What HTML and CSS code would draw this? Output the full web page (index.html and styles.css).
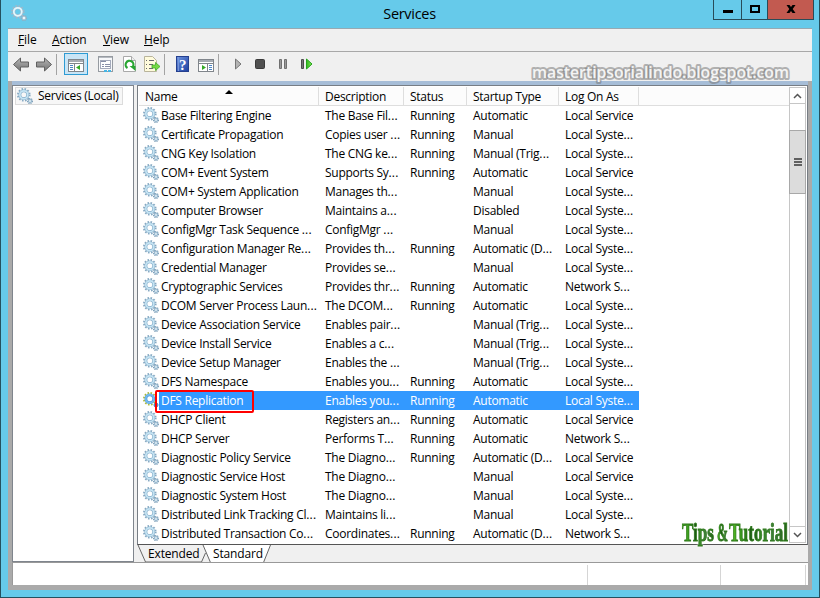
FILE: index.html
```html
<!DOCTYPE html>
<html lang="en">
<head>
    <meta charset="UTF-8">
    <meta name="viewport" content="width=device-width, initial-scale=1.0">
    <title>Services</title>
    <link rel="stylesheet" href="styles.css">
</head>
<body>
    <!-- Shared gear icons -->
    <svg class="defs" width="0" height="0">
        <symbol id="gear" viewBox="0 0 16 16">
            <circle cx="6.8" cy="6.8" r="5.9" fill="none" stroke="#86a9c2" stroke-width="1.8" stroke-dasharray="1.6 1.49"/>
            <circle cx="6.8" cy="6.8" r="3.9" fill="none" stroke="#85adca" stroke-width="2.8"/>
            <circle cx="6.8" cy="6.8" r="4" fill="none" stroke="#c5e4f3" stroke-width="1.7"/>
            <circle cx="13" cy="13" r="2.4" fill="none" stroke="#7d9eb8" stroke-width="1.3" stroke-dasharray="1.1 .78"/>
            <circle cx="13" cy="13" r="1.5" fill="#e8f3f8" stroke="#91b4cc" stroke-width="1.1"/>
        </symbol>
        <symbol id="gear-selected" viewBox="0 0 16 16">
            <circle cx="6.8" cy="6.8" r="5.9" fill="none" stroke="#a9b93c" stroke-width="1.8" stroke-dasharray="1.6 1.49"/>
            <circle cx="6.8" cy="6.8" r="3.9" fill="#fff" stroke="#4f9fe0" stroke-width="2.8"/>
            <circle cx="6.8" cy="6.8" r="4" fill="none" stroke="#78bdf0" stroke-width="1.5"/>
            <circle cx="13" cy="13" r="2" fill="#3f8fdd" stroke="#4a86bd"/>
        </symbol>
    </svg>

    <div class="window">
        <div class="titlebar">
            <svg class="gear title-gear"><use href="#gear"/></svg>
            <div class="title">Services</div>
            <div class="controls">
                <div class="control minimize"><span></span></div>
                <div class="control maximize"><span></span></div>
                <div class="control close"><svg width="10" height="8" viewBox="0 0 10 8"><path d="M.5 0h3L5 2 6.500 0h3L6.700 4l2.800 4h-3L5 6 3.500 8h-3l2.800-4z"/></svg></div>
            </div>
        </div>

        <div class="menubar">
            <span class="menu-file"><u>F</u>ile</span>
            <span class="menu-action"><u>A</u>ction</span>
            <span class="menu-view"><u>V</u>iew</span>
            <span class="menu-help"><u>H</u>elp</span>
        </div>

        <div class="toolbar">
            <svg width="804" height="29" viewBox="8 52 804 29">
                <defs>
                    <linearGradient id="arrow" x1="0" y1="0" x2="0" y2="1">
                        <stop offset="0" stop-color="#b5b5b5"/>
                        <stop offset="1" stop-color="#747474"/>
                    </linearGradient>
                    <linearGradient id="help" x1="0" y1="0" x2="1" y2="1">
                        <stop offset="0" stop-color="#6d93df"/>
                        <stop offset="1" stop-color="#1c3fa0"/>
                    </linearGradient>
                    <linearGradient id="go" x1="0" y1="0" x2="1" y2="0">
                        <stop offset="0" stop-color="#2fb81d"/>
                        <stop offset="1" stop-color="#86e75b"/>
                    </linearGradient>
                </defs>
                <!-- back / forward -->
                <path d="M13.500 64.500l7-6.500v4h8v5h-8v4z" fill="url(#arrow)" stroke="#606060"/>
                <path d="M51.500 64.500l-7-6.500v4h-8v5h8v4z" fill="url(#arrow)" stroke="#606060"/>
                <path d="M56.500 54v21M164.500 54v21M218.500 54v21" stroke="#a3a3a3"/>
                <!-- console tree toggle -->
                <rect x="64.500" y="53.500" width="23" height="21" fill="#c9e5f6" stroke="#2e9bd3"/>
                <rect x="68.500" y="59.500" width="15" height="12" fill="#fff" stroke="#80858b"/>
                <path d="M69 61h14" stroke="#a6abb2" stroke-width="2"/>
                <path d="M69 63.500h14M74.500 64v8" stroke="#80858b"/>
                <path d="M70 65.500h3M70 67.500h3M70 69.500h3" stroke="#4c86c6"/>
                <path d="M80 65v5l-4-2.500z" fill="#35a928"/>
                <!-- properties -->
                <rect x="98.500" y="56.500" width="14" height="15" fill="#f7f8fa" stroke="#969ba1"/>
                <path d="M99 57.500h13" stroke="#b6bac0"/>
                <rect x="100.500" y="60.500" width="10" height="8" fill="#fff" stroke="#a4aabb"/>
                <path d="M101 61.500h5M102 64.500h2M102 66.500h2M105 64.500h5M105 66.500h5" stroke="#8990a8"/>
                <path d="M104 71h3M108 71h3" stroke="#45b5e5" stroke-width="2"/>
                <!-- refresh -->
                <path d="M123.500 56.500h8l4 4v11h-12z" fill="#fff" stroke="#a9a9a9"/>
                <path d="M131.500 56.500v4h4" fill="#eee" stroke="#a9a9a9"/>
                <path d="M127.500 68A3.900 3.900 0 1 1 133 66.500" fill="none" stroke="#28a532" stroke-width="2.200"/>
                <path d="M129.500 66h6v5z" fill="#28a532"/>
                <!-- export list -->
                <path d="M144.500 56.500h8l4 4v11h-12z" fill="#fffbdc" stroke="#b9b49b"/>
                <path d="M146 60.500h1M146 64.500h1M146 68.500h1M149 60.500h5M149 64.500h4M149 68.500h4" stroke="#68686e"/>
                <path d="M152 65h3.500v-2.500l4.500 4-4.500 4V68H152z" fill="#76d943" stroke="#45ad28" stroke-width=".8"/>
                <!-- help -->
                <rect x="176.500" y="56.500" width="12" height="15" fill="url(#help)" stroke="#243f8e"/>
                <path d="M178.500 57v14" stroke="#7795d8"/>
                <text x="179" y="69.500" class="help-mark">?</text>
                <!-- action pane toggle -->
                <rect x="198.500" y="59.500" width="15" height="12" fill="#fff" stroke="#80858b"/>
                <path d="M199 61h14" stroke="#a6abb2" stroke-width="2"/>
                <path d="M199 63.500h14M207.500 64v8" stroke="#80858b"/>
                <path d="M209 65.500h3M209 67.500h3M209 69.500h3" stroke="#4c86c6"/>
                <path d="M202 65v5l4-2.500z" fill="#35a928"/>
                <!-- start, stop, pause, restart -->
                <path d="M235.500 59v10l5.500-5z" fill="#b3b3b3" stroke="#777"/>
                <rect x="255.500" y="59.500" width="9" height="9" rx="1" fill="#505050" stroke="#3a3a3a"/>
                <path d="M279.500 59.500h2v9h-2zM284.500 59.500h2v9h-2z" fill="#999" stroke="#707070"/>
                <path d="M301.500 59.500h2v9h-2z" fill="#777" stroke="#4d4d4d"/>
                <path d="M306.500 59v10l5.500-5z" fill="url(#go)" stroke="#25a51b"/>
            </svg>
            <svg class="watermark" width="264" height="34"><text x="2" y="26" textLength="257" lengthAdjust="spacingAndGlyphs">mastertipsorialindo.blogspot.com</text></svg>
        </div>

        <div class="workspace">
            <div class="panes">
                <div class="tree">
                    <div class="tree-item">
                        <svg class="gear"><use href="#gear"/></svg>
                        <span>Services (Local)</span>
                    </div>
                </div>

                <div class="right">
                    <div class="list">
                        <div class="table">
                            <div class="row head">
                                <div>Name<i class="sort"></i></div>
                                <div>Description</div>
                                <div>Status</div>
                                <div>Startup Type</div>
                                <div>Log On As</div>
                            </div>
                            <div id="services"></div>
                        </div>
                        <div class="scrollbar">
                            <div class="scroll-button"><svg width="9" height="6"><path d="M1 5l3.500-3.500L8 5"/></svg></div>
                            <div class="thumb"><span></span><span></span><span></span></div>
                            <div class="scroll-button down"><svg width="9" height="6"><path d="M1 1l3.500 3.500L8 1"/></svg></div>
                        </div>
                        <svg class="brand" width="112" height="32">
                            <defs>
                                <linearGradient id="brandFill" x1="0" y1="0" x2="1" y2="0">
                                    <stop offset="0" stop-color="#5cc422"/>
                                    <stop offset=".2" stop-color="#3b9a20"/>
                                    <stop offset=".4" stop-color="#17540f"/>
                                    <stop offset=".55" stop-color="#3a8a28"/>
                                    <stop offset=".75" stop-color="#3d7c3a"/>
                                    <stop offset="1" stop-color="#246317"/>
                                </linearGradient>
                            </defs>
                            <g class="brand-text">
                                <text x="2" y="22" textLength="32" lengthAdjust="spacingAndGlyphs">Tips</text>
                                <text x="37" y="22" textLength="11" lengthAdjust="spacingAndGlyphs">&amp;</text>
                                <text x="49" y="22" textLength="59" lengthAdjust="spacingAndGlyphs">Tutorial</text>
                            </g>
                        </svg>
                    </div>
                    <div class="tabs">
                        <svg width="135" height="18" viewBox="137 545 135 18">
                            <path d="M138 545l7.500 17h56l4-9" fill="none" stroke="#666"/>
                            <path d="M203 545l7.500 17.500h53l7-17.500" fill="#fff" stroke="#666"/>
                        </svg>
                        <span class="tab extended">Extended</span>
                        <span class="tab standard">Standard</span>
                    </div>
                </div>
            </div>
            <div class="statusbar"><div></div><div></div><div></div></div>
        </div>
    </div>

    <script>
        // name, description, status, startup type, log on as
        const services = [
            ['Base Filtering Engine', 'The Base Fil...', 'Running', 'Automatic', 'Local Service'],
            ['Certificate Propagation', 'Copies user ...', 'Running', 'Manual', 'Local Syste...'],
            ['CNG Key Isolation', 'The CNG ke...', 'Running', 'Manual (Trig...', 'Local Syste...'],
            ['COM+ Event System', 'Supports Sy...', 'Running', 'Automatic', 'Local Service'],
            ['COM+ System Application', 'Manages th...', '', 'Manual', 'Local Syste...'],
            ['Computer Browser', 'Maintains a...', '', 'Disabled', 'Local Syste...'],
            ['ConfigMgr Task Sequence ...', 'ConfigMgr ...', '', 'Manual', 'Local Syste...'],
            ['Configuration Manager Re...', 'Provides th...', 'Running', 'Automatic (D...', 'Local Syste...'],
            ['Credential Manager', 'Provides se...', '', 'Manual', 'Local Syste...'],
            ['Cryptographic Services', 'Provides thr...', 'Running', 'Automatic', 'Network S...'],
            ['DCOM Server Process Laun...', 'The DCOM...', 'Running', 'Automatic', 'Local Syste...'],
            ['Device Association Service', 'Enables pair...', '', 'Manual (Trig...', 'Local Syste...'],
            ['Device Install Service', 'Enables a c...', '', 'Manual (Trig...', 'Local Syste...'],
            ['Device Setup Manager', 'Enables the ...', '', 'Manual (Trig...', 'Local Syste...'],
            ['DFS Namespace', 'Enables you...', 'Running', 'Automatic', 'Local Syste...'],
            ['DFS Replication', 'Enables you...', 'Running', 'Automatic', 'Local Syste...'],
            ['DHCP Client', 'Registers an...', 'Running', 'Automatic', 'Local Service'],
            ['DHCP Server', 'Performs T...', 'Running', 'Automatic', 'Network S...'],
            ['Diagnostic Policy Service', 'The Diagno...', 'Running', 'Automatic (D...', 'Local Service'],
            ['Diagnostic Service Host', 'The Diagno...', '', 'Manual', 'Local Service'],
            ['Diagnostic System Host', 'The Diagno...', '', 'Manual', 'Local Syste...'],
            ['Distributed Link Tracking Cl...', 'Maintains li...', '', 'Manual', 'Local Syste...'],
            ['Distributed Transaction Co...', 'Coordinates...', 'Running', 'Automatic (D...', 'Network S...']
        ];
        const selected = 'DFS Replication';

        // Dots of a shortened text are set a little wider
        function format(text) {
            return text.replace('...', '<i class="dots">...</i>');
        }

        document.getElementById('services').innerHTML = services.map(service => {
            const [name, ...cells] = service;
            const isSelected = name === selected;
            return `<div class="row${isSelected ? ' selected' : ''}">
                <div class="name"><svg class="gear"><use href="#gear${isSelected ? '-selected' : ''}"/></svg><span>${format(name)}</span>${isSelected ? '<b class="marker"></b>' : ''}</div>
                ${cells.map(cell => `<div>${format(cell)}</div>`).join('')}
            </div>`;
        }).join('');
    </script>
</body>
</html>
```
FILE: styles.css
```css
* {
    box-sizing: border-box;
}
body {
    margin: 0;
    font-family: "Open Sans", "Noto Sans", sans-serif;
    font-size: 12px;
    color: #000;
    overflow: hidden;
}
svg {
    display: block;
    flex: none;
}
.defs {
    position: absolute;
}
.window {
    display: flex;
    flex-direction: column;
    width: 820px;
    height: 598px;
    padding: 0 7px 7px;
    background-color: #66caea;
    border: 1px solid #24515f;
    border-top: 0;
}
.gear {
    width: 16px;
    height: 16px;
}

/* Title bar */
.titlebar {
    display: flex;
    height: 28px;
    flex: none;
}
.title-gear {
    margin: 5px 0 0 3px;
    filter: brightness(1.1) grayscale(0.4);
}
.title {
    flex: 1;
    padding: 3px 0 0 79px;
    text-align: center;
    font-size: 14.5px;
    line-height: 21px;
    letter-spacing: -0.3px;
}
.controls {
    display: flex;
    width: 101px;
    height: 20px;
    margin-right: -2px;
    border: 1px solid #284c59;
    border-top: 0;
}
.control {
    display: flex;
    justify-content: center;
    align-items: center;
    border-right: 1px solid #284c59;
}
.minimize {
    width: 28px;
    padding-top: 4px;
}
.minimize span {
    width: 10px;
    height: 3px;
    background-color: #000;
}
.maximize {
    width: 26px;
}
.maximize span {
    width: 10px;
    height: 8px;
    margin-top: -1px;
    border: 2px solid #000;
}
.close {
    flex: 1;
    border-right: 0;
    background-color: #c25a50;
}
.close svg {
    margin-top: -1px;
}

/* Menu and toolbar */
.menubar {
    display: flex;
    height: 24px;
    flex: none;
    padding-left: 10px;
    background-color: #f0f0f0;
    border-top: 1px solid #97a9b2;
    border-bottom: 1px solid #a8a8a8;
    line-height: 22px;
    letter-spacing: -0.1px;
}
.menu-file {
    width: 34px;
}
.menu-action {
    width: 51px;
}
.menu-view {
    width: 41px;
}
.menu-help {
    width: 30px;
}
.toolbar {
    position: relative;
    height: 29px;
    flex: none;
    background-color: #f0f0f0;
}
.help-mark {
    font: bold 15px "Liberation Serif", serif;
    fill: #fff;
}
.watermark {
    position: absolute;
    left: 522px;
    top: 0;
    z-index: 2;
}
.watermark text {
    font-size: 17px;
    font-weight: 600;
    fill: #f4f4f4;
    stroke: rgba(120, 120, 120, 0.55);
    stroke-width: 4px;
    stroke-linejoin: round;
    paint-order: stroke;
}

/* Workspace */
.workspace {
    display: flex;
    flex-direction: column;
    flex: 1;
    min-height: 0;
    border: solid #aaa;
    border-width: 0 4px 5px;
    background-color: #f0f0f0;
}
.panes {
    display: flex;
    height: 481px;
    flex: none;
    border-top: 4px solid #a6bdd7;
}
.tree {
    width: 122px;
    margin-right: 3px;
    padding: 1px 2px;
    background-color: #fff;
    border: 1px solid #7f858d;
}
.tree-item {
    display: flex;
    width: 108px;
    height: 18px;
    padding-left: 1px;
    background-color: #f7f7f7;
    border: 1px solid #dcdcdc;
    line-height: 16px;
}
.tree-item span {
    margin-left: 5px;
    letter-spacing: -0.25px;
    white-space: nowrap;
}
.right {
    flex: 1;
    min-width: 0;
}
.list {
    position: relative;
    display: flex;
    height: 460px;
    padding: 1px 1px 0 1px;
    background-color: #fff;
    border: 1px solid #777d84;
    border-bottom-color: #555;
}
.table {
    flex: 1;
    min-width: 0;
    letter-spacing: -0.27px;
}
.row {
    display: grid;
    grid-template-columns: 181px 85px 63px 92px 79px;
    width: 500px;
    height: 19px;
    line-height: 19px;
    white-space: nowrap;
}
.row div {
    padding-left: 5px;
}
.row .name {
    position: relative;
    display: flex;
    padding-left: 4px;
}
.name .gear {
    margin-top: 1px;
}
.name span {
    flex: 1;
    margin-right: 1px;
    padding-left: 2px;
}
.dots {
    font-style: normal;
    letter-spacing: 0.2px;
}
.row.head {
    grid-template-columns: 180px 85px 63px 92px 80px;
    width: auto;
    background-color: #fcfcfc;
    border-bottom: 1px solid #dedede;
}
.head div {
    position: relative;
    padding-left: 6px;
    border-right: 1px solid #dedede;
}
.head div:last-child {
    padding-left: 6px;
}
.sort {
    position: absolute;
    left: 86px;
    top: 3px;
    border: 4px solid transparent;
    border-top: 0;
    border-bottom-color: #000;
}
.selected div {
    color: #fff;
    background-color: #3399ff;
}
.selected .name {
    background: linear-gradient(90deg, #fff 20px, #3399ff 20px);
}
.marker {
    position: absolute;
    left: 16px;
    top: -1px;
    width: 99px;
    height: 23px;
    border: 2px solid #f00;
    border-radius: 2px;
    z-index: 1;
}

/* Scrollbar */
.scrollbar {
    display: flex;
    flex-direction: column;
    width: 17px;
    height: 456px;
    border: 1px solid #c6c6c6;
}
.scroll-button {
    display: flex;
    justify-content: center;
    align-items: center;
    height: 16px;
    border-bottom: 1px solid #c6c6c6;
}
.scroll-button path {
    fill: none;
    stroke: #555;
    stroke-width: 1.5px;
}
.thumb {
    display: flex;
    flex-direction: column;
    justify-content: center;
    align-items: center;
    gap: 1px;
    height: 64px;
    margin: 26px -1px 0;
    background-color: #dcdcdc;
    border: 1px solid #a8a8a8;
}
.thumb span {
    width: 8px;
    height: 2px;
    background-color: #606060;
}
.scroll-button.down {
    margin-top: auto;
    border-top: 1px solid #c6c6c6;
    border-bottom: 0;
}

/* Logo over the list corner */
.brand {
    position: absolute;
    left: 542px;
    top: 433px;
    z-index: 2;
    overflow: visible;
}
.brand-text {
    font: bold 25px "Liberation Serif", serif;
    fill: url(#brandFill);
    stroke: #2f7a1c;
    stroke-width: 0.9px;
    filter: drop-shadow(0 0 1px #fff);
}

/* Tabs and status bar */
.tabs {
    display: grid;
    grid-template-columns: 11px 64px 62px;
    height: 17px;
    line-height: 18px;
    letter-spacing: -0.15px;
}
.tabs svg {
    grid-area: 1 / 1 / 2 / 4;
}
.tab {
    grid-row: 1;
    z-index: 1;
}
.extended {
    grid-column: 2;
}
.standard {
    grid-column: 3;
    padding-left: 1px;
}
.statusbar {
    display: grid;
    grid-template-columns: 575px 133px 85px;
    flex: 1;
    background-color: #fff;
    border-top: 1px solid #999;
    border-left: 1px solid #999;
}
.statusbar div {
    margin-top: 2px;
    border-right: 1px solid #d5d5d5;
}
```
